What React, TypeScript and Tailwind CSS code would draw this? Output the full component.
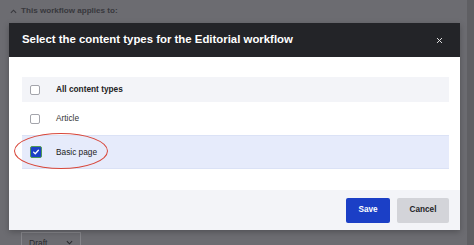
import React from 'react';

// --- DATA --- //
const contentTypes = [
    { id: 'all', label: 'All content types', header: true, checked: false },
    { id: 'article', label: 'Article', header: false, checked: false },
    { id: 'page', label: 'Basic page', header: false, checked: true },
];

const font = { fontFamily: '"Liberation Sans", Arial, sans-serif' };

// --- CHECKBOX --- //
const Checkbox = ({ checked }: { checked: boolean }) =>
    checked ? (
        <span className="flex items-center justify-center w-[12px] h-[12px] rounded-[2px] border border-[#4f9a55] bg-[#1b3fc6]">
            <svg viewBox="0 0 10 10" className="w-[8px] h-[8px]">
                <path d="M2 5.2 L4.1 7.2 L8 2.8" fill="none" stroke="#fff" strokeWidth="1.6" strokeLinecap="round" strokeLinejoin="round" />
            </svg>
        </span>
    ) : (
        <span className="block w-[10px] h-[10px] rounded-[2px] border border-[#a3a4ab] bg-white" />
    );

// --- CONTENT TYPE ROW --- //
const TypeRow = ({ row }: { row: typeof contentTypes[0] }) => (
    <div
        className={`flex items-center pl-[8px] ${
            row.header
                ? 'h-[25px] bg-[#f3f4f8] font-bold text-[#222]'
                : row.checked
                ? 'h-[34px] bg-[#e6ebfb] border-y border-[#dbe2f6] text-[#222]'
                : 'h-[33px] bg-white text-[#333]'
        }`}
    >
        <span className="w-[26px] flex items-center">
            <Checkbox checked={row.checked} />
        </span>
        <span className="text-[8.3px] leading-none">{row.label}</span>
    </div>
);

// --- MAIN --- //
export default function App() {
    return (
        <div className="relative w-[474px] h-[245px] overflow-hidden bg-[#6c6c71] flex" style={font}>
            {/* page behind the overlay */}
            <div className="flex-1 flex flex-col">
                <div className="flex items-center h-[23px] pl-[10px] gap-[4px] text-[#38383d]">
                    <svg viewBox="0 0 8 8" className="w-[7px] h-[7px]">
                        <path d="M1 5.5 L4 2.5 L7 5.5" fill="none" stroke="#38383d" strokeWidth="1.3" />
                    </svg>
                    <span className="text-[8.1px] font-bold">This workflow applies to:</span>
                </div>
                <div className="flex-1" />
                <div className="ml-[21px] w-[60px] h-[13px] border-l border-r border-t border-[#85858a] flex items-end justify-between px-[7px]">
                    <span className="text-[8.5px] leading-none text-[#2a2a2e] translate-y-[2px]">Draft</span>
                    <svg viewBox="0 0 8 8" className="w-[7px] h-[7px] translate-y-[1px]">
                        <path d="M1 2.5 L4 5.5 L7 2.5" fill="none" stroke="#2a2a2e" strokeWidth="1.2" />
                    </svg>
                </div>
            </div>
            <div className="w-[7px] bg-[#5f5f63]" />

            {/* dialog */}
            <div className="absolute left-[9px] top-[23px] w-[451px] h-[207px] flex flex-col bg-white shadow-[0_2px_6px_rgba(0,0,0,0.25)]">
                <div className="h-[34px] bg-[#232428] flex items-center justify-between pl-[13px] pr-[17px]">
                    <span className="text-white font-bold text-[11.4px]">Select the content types for the Editorial workflow</span>
                    <svg viewBox="0 0 10 10" className="w-[7px] h-[7px]">
                        <path d="M1.5 1.5 L8.5 8.5 M8.5 1.5 L1.5 8.5" stroke="#e8e8ea" strokeWidth="1.4" />
                    </svg>
                </div>
                <div className="flex-1 pt-[20px] pl-[13px] pr-[11px]">
                    {contentTypes.map(row => (
                        <TypeRow key={row.id} row={row} />
                    ))}
                </div>
                <div className="h-[40px] bg-[#f3f4f8] flex items-center justify-end gap-[7px] pr-[11px]">
                    <button className="w-[44px] h-[25px] bg-[#1b3fc6] rounded-[2px] text-white font-bold text-[8.2px]">Save</button>
                    <button className="w-[52px] h-[25px] bg-[#d3d4d9] rounded-[2px] text-[#222327] font-bold text-[8.2px]">Cancel</button>
                </div>
            </div>

            {/* red annotation ellipse */}
            <div className="absolute left-[14px] top-[133px] w-[94px] h-[36px] rounded-[50%] border-[1.5px] border-[#d8473a]" />
        </div>
    );
}
